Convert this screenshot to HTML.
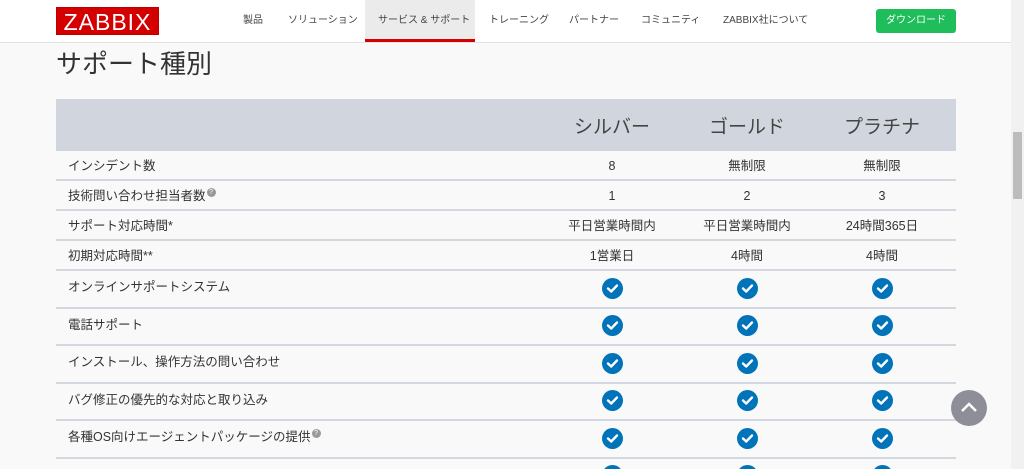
<!DOCTYPE html>
<html><head><meta charset="utf-8"><style>
*{margin:0;padding:0;box-sizing:border-box}
html,body{width:1024px;height:469px;overflow:hidden}
body{background:#f9f9f9;font-family:"Liberation Sans","Noto Sans CJK JP",sans-serif;color:#333;position:relative}
.hdr{position:absolute;left:0;top:0;width:1011px;height:43px;background:#fff;border-bottom:1px solid #e2e2e2}
.logo{position:absolute;left:56px;top:7px;width:103px;height:28px;background:#d40000;color:#fff;font-size:23px;letter-spacing:1px;line-height:28px;text-align:center;border:1px solid #b00}
.nav a{position:absolute;top:0;height:42px;line-height:42px;font-size:10px;color:#444;text-decoration:none;white-space:nowrap}
.act{position:absolute;left:365px;top:0;width:110px;height:42px;background:#ebebeb;border-bottom:3px solid #d40000}
.dl{position:absolute;left:876px;top:9px;width:80px;height:24px;background:#1fbe5b;border-radius:3px;color:#fff;font-size:10px;line-height:24px;text-align:center}
h1{position:absolute;left:56px;top:44px;font-size:26px;font-weight:normal;color:#333}
.th{position:absolute;left:56px;top:99px;width:900px;height:52px;background:#d1d5dd}
.th span{position:absolute;top:13px;font-size:19px;color:#444;width:120px;text-align:center}
.row{position:absolute;left:56px;width:900px;border-bottom:2px solid #d3d8e0;font-size:12.5px;color:#333}
.row .l{position:absolute;left:12px;white-space:nowrap}
.row .c{position:absolute;width:120px;text-align:center}
.q{display:inline-block;width:9px;height:9px;border-radius:50%;background:#999;color:#fff;font-size:7px;line-height:9px;text-align:center;position:relative;top:-6px;margin-left:1px}
.sb{position:absolute;left:1011px;top:0;width:13px;height:469px;background:#f1f1f1}
.th2{position:absolute;left:1013px;top:132px;width:9px;height:67px;background:#bcbcbc}
.up{position:absolute;left:951px;top:390px;width:36px;height:36px;border-radius:50%;background:#8e8e99}
</style></head><body>
<div class="hdr">
<div class="logo">ZABBIX</div>
<div class="act"></div>
<div class="nav">
<a style="left:243px">製品</a>
<a style="left:288px">ソリューション</a>
<a style="left:378px">サービス &amp; サポート</a>
<a style="left:489px">トレーニング</a>
<a style="left:569px">パートナー</a>
<a style="left:641px">コミュニティ</a>
<a style="left:723px">ZABBIX社について</a>
</div>
<div class="dl">ダウンロード</div>
</div>
<h1>サポート種別</h1>
<div class="th"><span style="left:496px">シルバー</span><span style="left:631px">ゴールド</span><span style="left:766px">プラチナ</span></div>

<div class="row" style="top:151px;height:30px;line-height:31px"><span class="l">インシデント数</span><span class="c" style="left:496px">8</span><span class="c" style="left:631px">無制限</span><span class="c" style="left:766px">無制限</span></div>
<div class="row" style="top:181px;height:30px;line-height:31px"><span class="l">技術問い合わせ担当者数<span class="q">?</span></span><span class="c" style="left:496px">1</span><span class="c" style="left:631px">2</span><span class="c" style="left:766px">3</span></div>
<div class="row" style="top:211px;height:30px;line-height:31px"><span class="l">サポート対応時間*</span><span class="c" style="left:496px">平日営業時間内</span><span class="c" style="left:631px">平日営業時間内</span><span class="c" style="left:766px">24時間365日</span></div>
<div class="row" style="top:241px;height:30px;line-height:31px"><span class="l">初期対応時間**</span><span class="c" style="left:496px">1営業日</span><span class="c" style="left:631px">4時間</span><span class="c" style="left:766px">4時間</span></div>

<div class="row" style="top:271px;height:38px;line-height:33px"><span class="l">オンラインサポートシステム</span></div>
<div class="row" style="top:309px;height:37px;line-height:32px"><span class="l">電話サポート</span></div>
<div class="row" style="top:346px;height:38px;line-height:32px"><span class="l">インストール、操作方法の問い合わせ</span></div>
<div class="row" style="top:384px;height:37px;line-height:32px"><span class="l">バグ修正の優先的な対応と取り込み</span></div>
<div class="row" style="top:421px;height:38px;line-height:32px"><span class="l">各種OS向けエージェントパッケージの提供<span class="q">?</span></span></div>
<div class="row" style="top:459px;height:10px;border-bottom:0;border-top:0"></div>

<svg style="position:absolute;left:0;top:0" width="1024" height="469">
<defs><symbol id="c" viewBox="0 0 21 21"><circle cx="10.5" cy="10.5" r="10.5" fill="#0073b9"/><path d="M6 10.5l3.2 3 5.8-6" stroke="#fff" stroke-width="2.4" fill="none" stroke-linecap="round" stroke-linejoin="round"/></symbol></defs>
<use href="#c" x="602" y="278" width="21" height="21"/><use href="#c" x="737" y="278" width="21" height="21"/><use href="#c" x="872" y="278" width="21" height="21"/>
<use href="#c" x="602" y="315" width="21" height="21"/><use href="#c" x="737" y="315" width="21" height="21"/><use href="#c" x="872" y="315" width="21" height="21"/>
<use href="#c" x="602" y="353" width="21" height="21"/><use href="#c" x="737" y="353" width="21" height="21"/><use href="#c" x="872" y="353" width="21" height="21"/>
<use href="#c" x="602" y="390" width="21" height="21"/><use href="#c" x="737" y="390" width="21" height="21"/><use href="#c" x="872" y="390" width="21" height="21"/>
<use href="#c" x="602" y="428" width="21" height="21"/><use href="#c" x="737" y="428" width="21" height="21"/><use href="#c" x="872" y="428" width="21" height="21"/>
<use href="#c" x="602" y="465" width="21" height="21"/><use href="#c" x="737" y="465" width="21" height="21"/><use href="#c" x="872" y="465" width="21" height="21"/>
</svg>
<div class="up"><svg width="36" height="36"><path d="M11 21l7-7 7 7" stroke="#fff" stroke-width="2.5" fill="none"/></svg></div>
<div class="sb"></div><div class="th2"></div>
</body></html>
